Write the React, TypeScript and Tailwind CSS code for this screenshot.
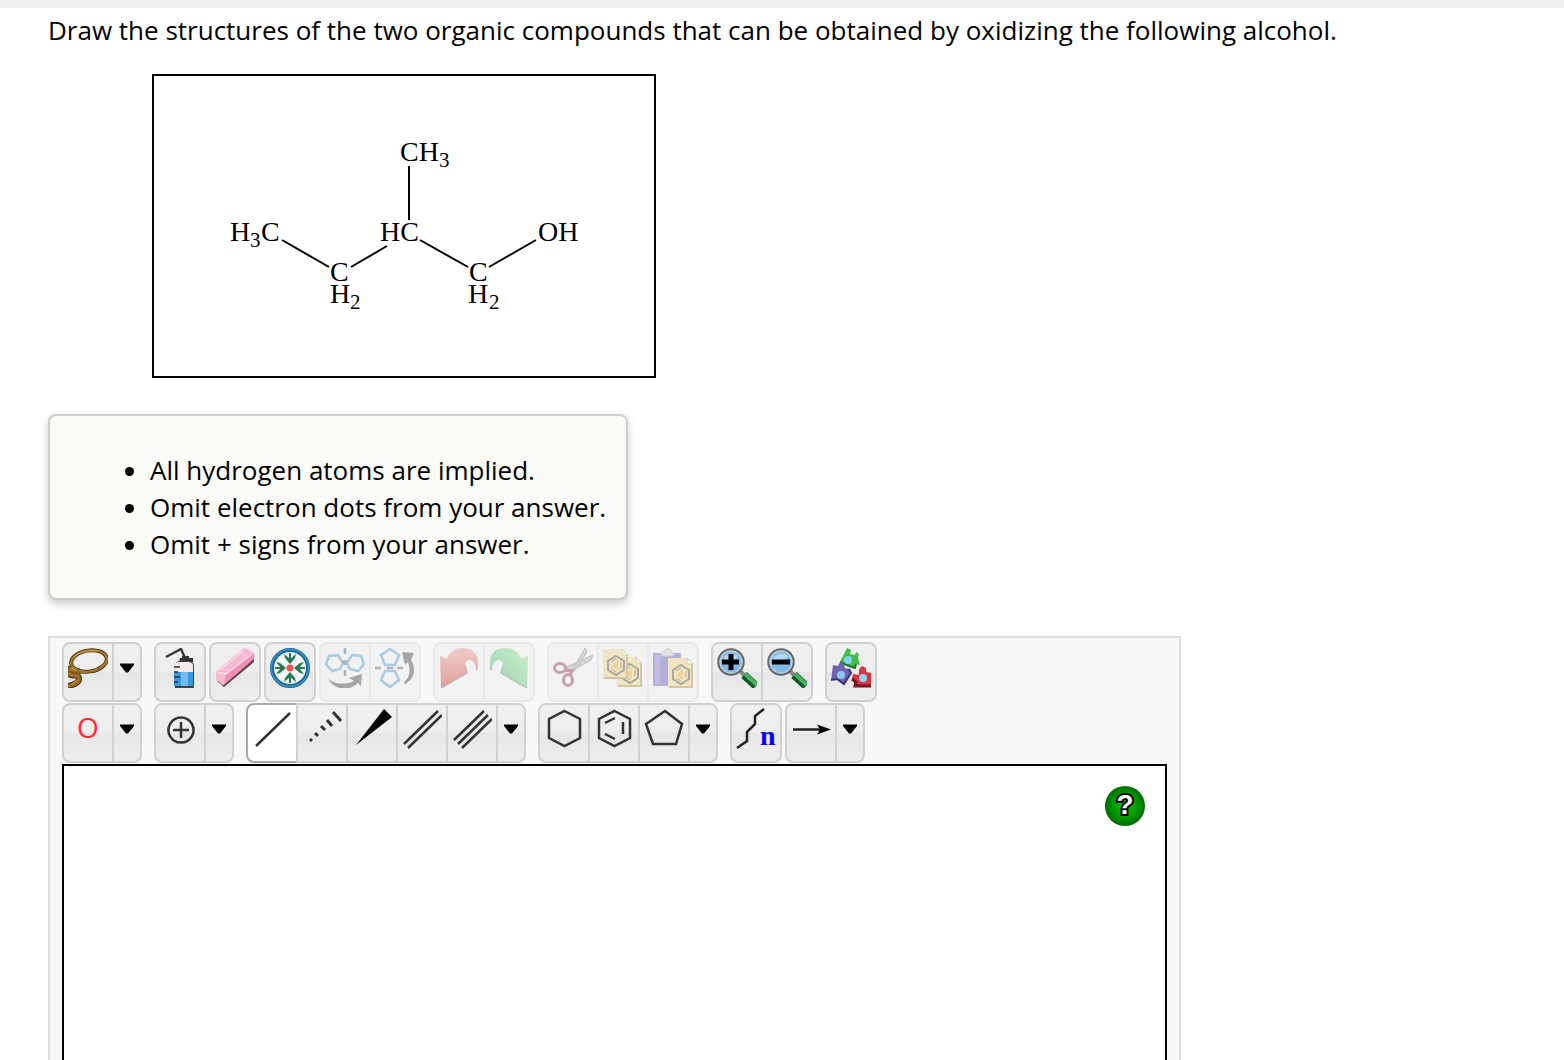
import { useState } from 'react';
import type { ReactNode } from 'react';

interface Tool {
  id: string;
  label: string;
  icon?: ReactNode;
  menu?: boolean;
  disabled?: boolean;
}

const ring = 'M20.5 2 36 10V29L20.5 37 5 29V10Z';

function Icon({ children }: { children: ReactNode }) {
  return (
    <svg viewBox="0 0 40 40" className="w-10 h-10 overflow-hidden" fill="none" aria-hidden="true">
      {children}
    </svg>
  );
}

function LassoIcon() {
  return (
    <Icon>
      <g strokeLinecap="round">
        <ellipse cx="21" cy="13" rx="18" ry="10.5" transform="rotate(-9 21 13)" stroke="#4a3210" strokeWidth="4" />
        <path d="M1 26C5 29 10 26 11 30S6 37 0 38M0 21 10 23" stroke="#4a3210" strokeWidth="6" />
        <path d="M0 21C5 18 9 19 14 25L8 30 0 26Z" fill="#7a5420" />
        <ellipse cx="21" cy="13" rx="18" ry="10.5" transform="rotate(-9 21 13)" stroke="#a0752f" strokeWidth="2.5" />
        <path d="M1 26C5 29 10 26 11 30S6 37 0 38M1 21 10 23" stroke="#9c702a" strokeWidth="3.5" />
        <path d="M6 9C11 4 20 2 29 3M3 20l5 2M9 32l-5 4" stroke="#d0a45c" strokeWidth="1" />
      </g>
    </Icon>
  );
}

function BottleIcon() {
  return (
    <Icon>
      <path d="M6 9 21 1 25 10" stroke="#3a3a3a" strokeWidth="2.5" strokeLinejoin="round" />
      <path d="M20 10h2V8h7v2h4v4H19Z" fill="#333" />
      <path d="M15 18c0-3 2-5 5-5h9c3 0 5 2 5 5v22H15Z" fill="#444" />
      <path d="M14 18c0-3 2-4 5-4h9c3 0 5 1 5 4v6H14Z" fill="#f3e9e6" />
      <path d="M14 24h19v14H14Z" fill="#3498dc" />
      <path d="M21 24h7v14h-7Z" fill="#6fbdf0" />
      <path d="M14 19h6M14 24h4M14 29h6M14 34h4" stroke="#333" strokeWidth="1.5" />
    </Icon>
  );
}

function EraserIcon() {
  return (
    <Icon>
      <path d="M2 33 9 39 39 14V9L9 35Z" fill="#5d3f4b" />
      <path d="M1 24 28 1q2-1 4 0l6 4q2 2 1 6L10 36q-2 2-4 0L1 31Z" fill="#f08fb6" />
      <path d="M1 24 28 1q2-1 4 0l6 4L11 26Z" fill="#f9b9d2" />
      <path d="M1 24 11 26 9 37 1 31Z" fill="#f6bcd2" />
      <path d="M2 24 11 26 37 6M5 22 28 3" stroke="#fddbe8" strokeWidth="1.5" />
    </Icon>
  );
}

function CleanIcon() {
  return (
    <Icon>
      <circle cx="20" cy="20" r="18" fill="#f1f7f4" stroke="#1c689c" strokeWidth="4" />
      <circle cx="20" cy="20" r="18.5" stroke="#3c90c6" strokeWidth="1.5" />
      {[0, 90, 180, 270].map(angle => (
        <g key={angle} transform={`rotate(${angle} 20 20)`}>
          <path d="M20 5v10" stroke="#2b7a54" strokeWidth="2" />
          <path d="M14 6 20 11 26 6 25 10 20 16 15 10Z" fill="#2a7852" />
        </g>
      ))}
      <circle cx="20" cy="20" r="3.5" fill="#e8555a" />
    </Icon>
  );
}

function FlipHorizontalIcon() {
  return (
    <Icon>
      <path d="M18 15 13 7 4 8 1 16 7 23 15 21ZM22 15 27 7 36 8 39 16 33 23 25 21Z" stroke="#3d90c6" strokeWidth="2.5" />
      <path d="M20 0v6M20 22v6M20 12v5M17 14h6" stroke="#555" strokeWidth="2.5" />
      <path d="M3 31C10 43 25 43 33 35L36 38 37 26 24 30 29 33C22 37 12 37 3 31Z" fill="#333" />
    </Icon>
  );
}

function FlipVerticalIcon() {
  return (
    <Icon>
      <path d="M15 1 24 7 20 17H10L6 7ZM15 39 24 32 20 23H10L6 32Z" stroke="#3d90c6" strokeWidth="2.5" />
      <path d="M0 20h6M22 20h6M12 20h6" stroke="#555" strokeWidth="2.5" />
      <path d="M30 36C40 31 41 20 36 12L39 5 27 4 30 17 33 14C36 22 35 29 29 34Z" fill="#333" />
    </Icon>
  );
}

const arrowPath = 'M1 8 8 11C10 4 16 0 23 0 34 0 39 6 39 14V22H37C37 16 34 12 30 12 27 12 26 15 26 18L28 25 2 40Z';

function UndoIcon() {
  return (
    <Icon>
      <defs>
        <linearGradient id="undo" x1="0" y1="0" x2="0" y2="1">
          <stop stopColor="#ea9790" />
          <stop offset="1" stopColor="#c4281e" />
        </linearGradient>
      </defs>
      <path d={arrowPath} fill="url(#undo)" />
      <path d="M2 40 28 25 26 18" stroke="#7c4a45" strokeWidth="1.5" />
    </Icon>
  );
}

function RedoIcon() {
  return (
    <Icon>
      <defs>
        <linearGradient id="redo" x1="0" y1="0" x2="1" y2="1">
          <stop stopColor="#8ff08c" />
          <stop offset="1" stopColor="#1f9a55" />
        </linearGradient>
      </defs>
      <path d={arrowPath} transform="matrix(-1 0 0 1 40 0)" fill="url(#redo)" />
      <path d="M38 40 12 25 14 18" stroke="#4d8a5c" strokeWidth="1.5" />
    </Icon>
  );
}

function CutIcon() {
  return (
    <Icon>
      <path d="M11 20 40 7 38 12 20 22 13 23ZM16 28 32 0 34 4 23 21Z" fill="#aaa" stroke="#777" />
      <ellipse cx="7" cy="20" rx="5.5" ry="4.5" stroke="#8b2340" strokeWidth="3" />
      <ellipse cx="15" cy="32" rx="4.5" ry="5.5" stroke="#8b2340" strokeWidth="3" />
      <path d="M12 22 19 23 17 27" stroke="#8b2340" strokeWidth="3" />
    </Icon>
  );
}

function Page({ x, y }: { x: number; y: number }) {
  return (
    <g transform={`translate(${x} ${y})`}>
      <path d="M0 1H19L25 7V31H0Z" fill="#f2d47c" />
      <path d="M24 7V30H1" stroke="#a8852f" strokeWidth="2" />
      <path d="M19 1V7H25Z" fill="#fff6cf" stroke="#bd9d4d" />
      <path d="M13 8 21 13V22L13 27 5 22V13Z" stroke="#3f3a28" strokeWidth="2" />
      <path d="M8 18 15 12V23Z" fill="#eba70f" />
      <path d="M8 14 13 11M18 14V21M8 21 13 24" stroke="#4b452f" />
    </g>
  );
}

function CopyIcon() {
  return (
    <Icon>
      <Page x={14} y={8} />
      <Page x={0} y={0} />
    </Icon>
  );
}

function PasteIcon() {
  return (
    <Icon>
      <path d="M0 5H28V38H0Z" fill="#5a50b4" />
      <path d="M2 7H7V36H2Z" fill="#7b72c8" />
      <path d="M8 7C9 4 11 4 12 2Q15-1 18 2 18 4 21 6V8H8Z" fill="#ccc" stroke="#999" />
      <Page x={15} y={9} />
    </Icon>
  );
}

function ZoomIcon({ plus }: { plus?: boolean }) {
  return (
    <Icon>
      <path d="M22 22 28 28" stroke="#888" strokeWidth="4" />
      <path d="M27 27 39 38" stroke="#10582a" strokeWidth="8" />
      <path d="M28 26 40 37" stroke="#46b060" strokeWidth="4" />
      <circle cx="14" cy="14" r="12.5" fill="#82b8e6" stroke="#666" strokeWidth="2.5" />
      <circle cx="14" cy="14" r="11" stroke="#b9cfdd" strokeWidth="1.5" />
      <path d="M5 15C5 7 15 3 21 8 19 13 12 16 5 15Z" fill="#b4d7f2" />
      <path d={plus ? 'M5 14H22M14 6V22' : 'M5 14H23'} stroke="#000" strokeWidth="5" />
    </Icon>
  );
}

function PiecesIcon() {
  return (
    <Icon>
      <path d="M16 0 20 2 19 6 24 7 25 4 28 6 27 10 29 17 25 16 24 20 18 18 9 14Z" fill="#43bf45" />
      <path d="M9 14 18 18 24 20 25 16" stroke="#22762e" strokeWidth="2" />
      <path d="M2 17 7 18 9 14 13 16 14 20 18 21 20 25 17 29 13 36 9 34 6 30 0 32Z" fill="#7361b4" />
      <path d="M18 21 20 25 13 36 6 31 0 32" stroke="#3b3076" strokeWidth="2" />
      <path d="M28 21 31 18 35 20 35 24 40 25V39H24L25 34 21 31 22 26 28 27Z" fill="#d8353e" />
      <path d="M40 38H24L25 34 21 31" stroke="#6f1822" strokeWidth="3" />
      <circle cx="17" cy="12" r="4" fill="#7fd3f2" />
      <circle cx="10" cy="27" r="4" fill="#8fc7f2" />
      <circle cx="32" cy="30" r="4" fill="#8fd6f4" />
    </Icon>
  );
}

function LineIcon({ d, width = 2.5 }: { d: string; width?: number }) {
  return (
    <Icon>
      <path d={d} stroke="#333" strokeWidth={width} />
    </Icon>
  );
}

function ChainIcon() {
  return (
    <svg viewBox="0 0 40 40" className="w-10 h-10 overflow-visible" fill="none" aria-hidden="true">
      <path d="M28 0 19 7V15L11 23V32L1 39" stroke="#222" strokeWidth="2.5" />
      <text x="24" y="36" fill="#00f" className="font-['Liberation_Serif',serif] font-bold text-[28px]">n</text>
    </svg>
  );
}

const topGroups: Tool[][][] = [
  [[{ id: 'lasso', label: 'Lasso select', icon: <LassoIcon /> }, { id: 'select-menu', label: 'Selection tools', menu: true }]],
  [
    [{ id: 'clear', label: 'Clear', icon: <BottleIcon /> }],
    [{ id: 'erase', label: 'Erase', icon: <EraserIcon /> }],
    [{ id: 'clean', label: 'Clean', icon: <CleanIcon /> }],
    [
      { id: 'flip-h', label: 'Flip horizontally', icon: <FlipHorizontalIcon />, disabled: true },
      { id: 'flip-v', label: 'Flip vertically', icon: <FlipVerticalIcon />, disabled: true },
    ],
  ],
  [[
    { id: 'undo', label: 'Undo', icon: <UndoIcon />, disabled: true },
    { id: 'redo', label: 'Redo', icon: <RedoIcon />, disabled: true },
  ]],
  [[
    { id: 'cut', label: 'Cut', icon: <CutIcon />, disabled: true },
    { id: 'copy', label: 'Copy', icon: <CopyIcon />, disabled: true },
    { id: 'paste', label: 'Paste', icon: <PasteIcon />, disabled: true },
  ]],
  [[
    { id: 'zoom-in', label: 'Zoom in', icon: <ZoomIcon plus /> },
    { id: 'zoom-out', label: 'Zoom out', icon: <ZoomIcon /> },
  ]],
  [[{ id: 'templates', label: 'Templates', icon: <PiecesIcon /> }]],
];

const bottomGroups: Tool[][][] = [
  [[
    {
      id: 'oxygen',
      label: 'Oxygen',
      icon: <span className="block w-10 text-center font-['Open_Sans',sans-serif] text-[28px] leading-9 text-[#ff2b2b]">O</span>,
    },
    { id: 'element-menu', label: 'Elements', menu: true },
  ]],
  [[
    {
      id: 'charge',
      label: 'Increase charge',
      icon: <LineIcon d="M21 8.5a12.5 12.5 0 1 0 .01 0ZM21 13V29M13 21H29" />,
    },
    { id: 'charge-menu', label: 'Attributes', menu: true },
  ]],
  [[
    { id: 'single', label: 'Single bond', icon: <LineIcon d="M4 37 38 4" /> },
    {
      id: 'recessed',
      label: 'Recessed bond',
      icon: <LineIcon width={3} d="M8 30 10 32M13 24 16 27M19 17 23 21M25 11 30 17M31 3 39 12" />,
    },
    { id: 'wedge', label: 'Protruding bond', icon: <Icon><path d="M4 36 32 0 40 8Z" fill="#000" /></Icon> },
    { id: 'double', label: 'Double bond', icon: <LineIcon d="M2 35 36 2M6 39 40 6" /> },
    { id: 'triple', label: 'Triple bond', icon: <LineIcon d="M2 31 32 2M6 35 36 6M10 39 40 10" /> },
    { id: 'bond-menu', label: 'Bonds', menu: true },
  ]],
  [[
    { id: 'cyclohexane', label: 'Cyclohexane', icon: <LineIcon d={ring} /> },
    { id: 'benzene', label: 'Benzene', icon: <LineIcon d={ring + 'M11 14 21 9M29 13V25M11 25 21 30'} /> },
    { id: 'cyclopentane', label: 'Cyclopentane', icon: <LineIcon d="M21 2 38 15 32 35H9L2 15Z" /> },
    { id: 'ring-menu', label: 'Rings', menu: true },
  ]],
  [
    [{ id: 'chain', label: 'Chain', icon: <ChainIcon /> }],
    [
      {
        id: 'arrow',
        label: 'Reaction arrow',
        icon: (
          <Icon>
            <path d="M2 20.5H30" stroke="#222" strokeWidth="2.5" />
            <path d="M26 15.5 40 20.5 26 25.5 29 20.5Z" fill="#000" />
          </Icon>
        ),
      },
      { id: 'arrow-menu', label: 'Arrows', menu: true },
    ],
  ],
];

interface ToolRowProps {
  groups: Tool[][][];
  selected: string;
  onSelect: (id: string) => void;
}

function ToolRow({ groups, selected, onSelect }: ToolRowProps) {
  return (
    <div className="flex flex-wrap gap-x-3 gap-y-px">
      {groups.map((group, i) => (
        <div key={i} className="flex gap-[3px]">
          {group.map(set => (
            <div key={set[0].id} className="flex">
              {set.map(tool => (
                <button
                  key={tool.id}
                  type="button"
                  aria-label={tool.label}
                  disabled={tool.disabled}
                  onClick={() => !tool.menu && onSelect(tool.id)}
                  className={`h-[60px] shrink-0 border-2 pt-1 -ml-[2px] first:ml-0 first:rounded-l-lg last:rounded-r-lg flex items-start justify-center ${
                    tool.menu ? 'w-[30px]' : 'w-[52px]'
                  } ${
                    selected === tool.id
                      ? 'bg-white border-[#aaa]'
                      : tool.disabled
                        ? 'bg-[#f2f2f2] border-[#e8e8e8]'
                        : 'border-[#d0d0d0] bg-[linear-gradient(#f0f0f0,#ededed_50%,#e6e6e6_50%,#eeeeee)]'
                  }`}
                >
                  {tool.menu ? (
                    <svg viewBox="0 0 16 40" className="w-4 h-10 shrink-0" aria-hidden="true">
                      <path d="M1 15.5H15V17L9 24.5H7L1 17Z" fill="#000" />
                    </svg>
                  ) : (
                    <span className={tool.disabled ? 'opacity-40' : ''}>{tool.icon}</span>
                  )}
                </button>
              ))}
            </div>
          ))}
        </div>
      ))}
    </div>
  );
}

function Molecule() {
  return (
    <svg viewBox="0 0 500 300" className="block w-full" role="img" aria-label="2-methylbutan-1-ol">
      <g stroke="#000" strokeWidth="2">
        <path d="M255 90V144M128 164 175 191M197 191 233 170M266 164 314 191M335 191 382 164" />
      </g>
      <g className="font-['Liberation_Serif',serif] text-[28px]">
        <text x="246" y="85">CH</text>
        <text x="76" y="165">H</text>
        <text x="107" y="165">C</text>
        <text x="226" y="165">HC</text>
        <text x="384" y="165">OH</text>
        <text x="176" y="205">C</text>
        <text x="176" y="227">H</text>
        <text x="315" y="205">C</text>
        <text x="314" y="227">H</text>
      </g>
      <g className="font-['Liberation_Serif',serif] text-[21px]">
        <text x="285" y="91">3</text>
        <text x="96" y="171">3</text>
        <text x="196" y="233">2</text>
        <text x="335" y="233">2</text>
      </g>
    </svg>
  );
}

export default function App() {
  const [selected, setSelected] = useState('single');

  return (
    <div className="h-screen overflow-hidden bg-white text-black font-['Open_Sans',sans-serif] text-[26px] leading-[37px]">
      <div className="h-2 bg-[#efefef]" />
      <main className="px-12 pt-1">
        <p>Draw the structures of the two organic compounds that can be obtained by oxidizing the following alcohol.</p>

        <div className="ml-[104px] mt-[25px] max-w-[504px] border-2 border-black">
          <Molecule />
        </div>

        <div className="mt-9 w-fit rounded-lg border-2 border-[#ccc] bg-[#fafbf7] pt-9 pb-[35px] pl-[100px] pr-5 shadow-[0_4px_8px_rgba(0,0,0,0.2)]">
          <ul className="list-disc">
            <li>All hydrogen atoms are implied.</li>
            <li>Omit electron dots from your answer.</li>
            <li>Omit + signs from your answer.</li>
          </ul>
        </div>

        <section className="mt-9 max-w-[1133px] border-2 border-[#ddd] bg-[#f8f8f8] px-3 pt-1 pb-3">
          <div className="flex flex-col gap-px">
            <ToolRow groups={topGroups} selected={selected} onSelect={setSelected} />
            <ToolRow groups={bottomGroups} selected={selected} onSelect={setSelected} />
            <div className="flex min-h-[600px] items-start justify-end border-2 border-black bg-white p-5">
              <button type="button" aria-label="Help" className="rounded-full">
                <svg viewBox="0 0 40 40" className="block w-10 h-10">
                  <defs>
                    <radialGradient id="help">
                      <stop stopColor="#00c800" />
                      <stop offset="0.5" stopColor="#00a400" />
                      <stop offset="1" stopColor="#006c00" />
                    </radialGradient>
                  </defs>
                  <circle cx="20" cy="20" r="20" fill="url(#help)" />
                  <text
                    x="20"
                    y="28"
                    textAnchor="middle"
                    fill="#fff"
                    stroke="#000"
                    strokeWidth="4"
                    paintOrder="stroke"
                    className="font-['Liberation_Sans',sans-serif] font-bold text-[28px]"
                  >
                    ?
                  </text>
                </svg>
              </button>
            </div>
          </div>
        </section>
      </main>
    </div>
  );
}
